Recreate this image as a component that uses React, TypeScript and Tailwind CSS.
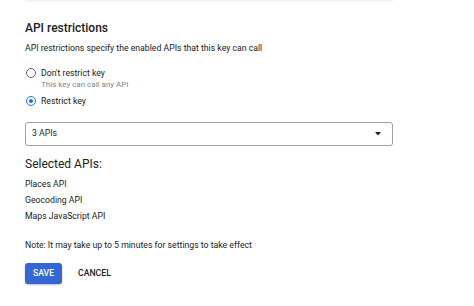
export default function App() {
  return (
    <div className="w-[474px] h-[306px] bg-white overflow-hidden font-['Roboto',sans-serif] text-[#202124]">
      <div className="ml-[25px] w-[368px]">
        {/* card edge above */}
        <div className="h-[2px] bg-[#f1f3f4]" />

        <h2 className="mt-[18px] text-[12px] leading-[16px] font-medium">API restrictions</h2>
        <p className="mt-[6px] text-[8.7px] leading-[12px]">
          API restrictions specify the enabled APIs that this key can call
        </p>

        {/* radio options */}
        <div className="mt-[13px] flex flex-col">
          <label className="flex items-start gap-[5px]">
            <span className="ml-[1px] mt-[1px] w-[10px] h-[10px] rounded-full border-[1.5px] border-[#5f6368] shrink-0" />
            <span className="flex flex-col">
              <span className="text-[8.7px] leading-[12px]">Don't restrict key</span>
              <span className="text-[8px] leading-[12px] text-[#80868b]">This key can call any API</span>
            </span>
          </label>
          <label className="mt-[4px] flex items-center gap-[5px]">
            <span className="ml-[1px] w-[10px] h-[10px] rounded-full border-[1.5px] border-[#1a73e8] flex items-center justify-center shrink-0">
              <span className="w-[4px] h-[4px] rounded-full bg-[#1a73e8]" />
            </span>
            <span className="text-[8.7px] leading-[12px]">Restrict key</span>
          </label>
        </div>

        {/* select */}
        <div className="mt-[15px] h-[24px] border border-[#9aa0a6] rounded-[3px] flex items-center justify-between pl-[6px] pr-[11px]">
          <span className="text-[8.7px]">3 APIs</span>
          <svg width="6" height="4" viewBox="0 0 6 4">
            <path d="M0 0h6L3 3.5z" fill="#202124" />
          </svg>
        </div>

        <h3 className="mt-[11px] text-[12px] leading-[14px]">Selected APIs:</h3>
        <ul className="mt-[5px] flex flex-col text-[8.7px] leading-[16px]">
          <li>Places API</li>
          <li>Geocoding API</li>
          <li>Maps JavaScript API</li>
        </ul>

        <p className="mt-[15px] text-[8.7px] leading-[12px]">
          Note: It may take up to 5 minutes for settings to take effect
        </p>

        <div className="mt-[12px] flex items-center gap-[16px]">
          <button className="h-[21px] w-[37px] rounded-[3px] bg-[#3367d6] text-white text-[8.7px] font-medium shadow-[0_1px_2px_rgba(0,0,0,0.25)]">
            SAVE
          </button>
          <button className="text-[8.7px] font-medium text-[#202124]">CANCEL</button>
        </div>
      </div>
    </div>
  );
}
